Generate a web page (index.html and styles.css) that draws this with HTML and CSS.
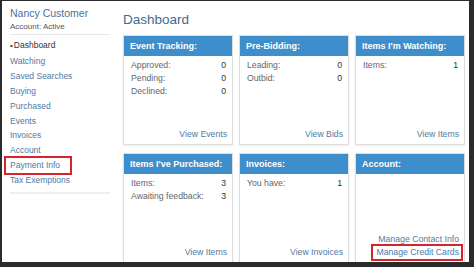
FILE: index.html
```html
<!DOCTYPE html>
<html lang="en">
<head>
    <meta charset="UTF-8">
    <title>Dashboard</title>
    <link rel="stylesheet" href="styles.css">
</head>
<body>
    <div id="frame">
        <div id="side">
            <div class="user">Nancy Customer</div>
            <div class="status">Account: Active</div>
            <ul class="nav">
                <li class="cur">Dashboard</li>
                <li>Watching</li>
                <li>Saved Searches</li>
                <li>Buying</li>
                <li>Purchased</li>
                <li>Events</li>
                <li>Invoices</li>
                <li>Account</li>
                <li class="mark">Payment Info</li>
                <li>Tax Exemptions</li>
            </ul>
        </div>
        <div id="main">
            <h1>Dashboard</h1>
            <div class="grid">
                <div class="card">
                    <div class="head">Event Tracking:</div>
                    <div class="body">
                        <div class="row"><span>Approved:</span><b>0</b></div>
                        <div class="row"><span>Pending:</span><b>0</b></div>
                        <div class="row"><span>Declined:</span><b>0</b></div>
                    </div>
                    <div class="foot"><a>View Events</a></div>
                </div>
                <div class="card">
                    <div class="head">Pre-Bidding:</div>
                    <div class="body">
                        <div class="row"><span>Leading:</span><b>0</b></div>
                        <div class="row"><span>Outbid:</span><b>0</b></div>
                    </div>
                    <div class="foot"><a>View Bids</a></div>
                </div>
                <div class="card">
                    <div class="head">Items I'm Watching:</div>
                    <div class="body">
                        <div class="row"><span>Items:</span><b>1</b></div>
                    </div>
                    <div class="foot"><a>View Items</a></div>
                </div>
                <div class="card">
                    <div class="head">Items I've Purchased:</div>
                    <div class="body">
                        <div class="row"><span>Items:</span><b>3</b></div>
                        <div class="row"><span>Awaiting feedback:</span><b>3</b></div>
                    </div>
                    <div class="foot"><a>View Items</a></div>
                </div>
                <div class="card">
                    <div class="head">Invoices:</div>
                    <div class="body">
                        <div class="row"><span>You have:</span><b>1</b></div>
                    </div>
                    <div class="foot"><a>View Invoices</a></div>
                </div>
                <div class="card">
                    <div class="head">Account:</div>
                    <div class="body"></div>
                    <div class="foot">
                        <a>Manage Contact Info</a>
                        <a class="mark">Manage Credit Cards</a>
                    </div>
                </div>
            </div>
        </div>
    </div>
</body>
</html>
```

FILE: styles.css
```css
*{margin:0;padding:0;box-sizing:border-box;}
html,body{height:100%;}
body{background:#2b2b2b;padding:1px 5px 5px 2px;font-family:"Liberation Sans",Arial,sans-serif;}
#frame{background:#fff;height:100%;display:flex;overflow:hidden;}
#side{width:114px;padding:5px 0 0 8px;}
.user{font-size:10.5px;color:#48729a;line-height:14px;}
.status{font-size:8px;color:#555;line-height:12px;margin-top:1px;padding-bottom:1px;border-bottom:1px solid #e8e8e8;width:100px;}
.nav{list-style:none;font-size:8.5px;color:#4f7aa3;width:100px;padding-top:3px;padding-bottom:4px;border-bottom:2px solid #eee;}
.nav li{line-height:14.9px;}
.nav li.cur{color:#333;}
.nav li.cur:before{content:"\2022";font-size:8px;margin-right:1px;}
.nav li.mark{outline:2px solid #d9232a;outline-offset:0;margin-left:-4px;padding-left:4px;width:64px;}
#main{flex:1;padding:9px 0 0 7px;}
h1{font-weight:normal;font-size:13.5px;color:#3d6b93;line-height:19px;margin-bottom:6px;}
.grid{display:grid;grid-template-columns:110px 110px 110px;grid-auto-rows:110px;column-gap:6px;row-gap:8px;}
.card{border:1px solid #dedede;display:flex;flex-direction:column;box-shadow:0 1px 2px rgba(0,0,0,.08);}
.head{background:#3e8ecb;color:#fff;font-weight:bold;font-size:9px;height:20px;line-height:20px;padding-left:6px;}
.body{flex:1;padding:3px 6px 0 7px;font-size:8.7px;color:#666;}
.row{display:flex;justify-content:space-between;line-height:13px;}
.row b{color:#333;font-weight:normal;}
.foot{display:flex;flex-direction:column;align-items:flex-end;padding:0 5px 3px 0;font-size:8.7px;}
.foot a{color:#4f7aa3;line-height:13px;}
.foot a.mark{outline:2px solid #d9232a;outline-offset:0;padding:0 2px 0 3px;margin-right:-2px;}
```
